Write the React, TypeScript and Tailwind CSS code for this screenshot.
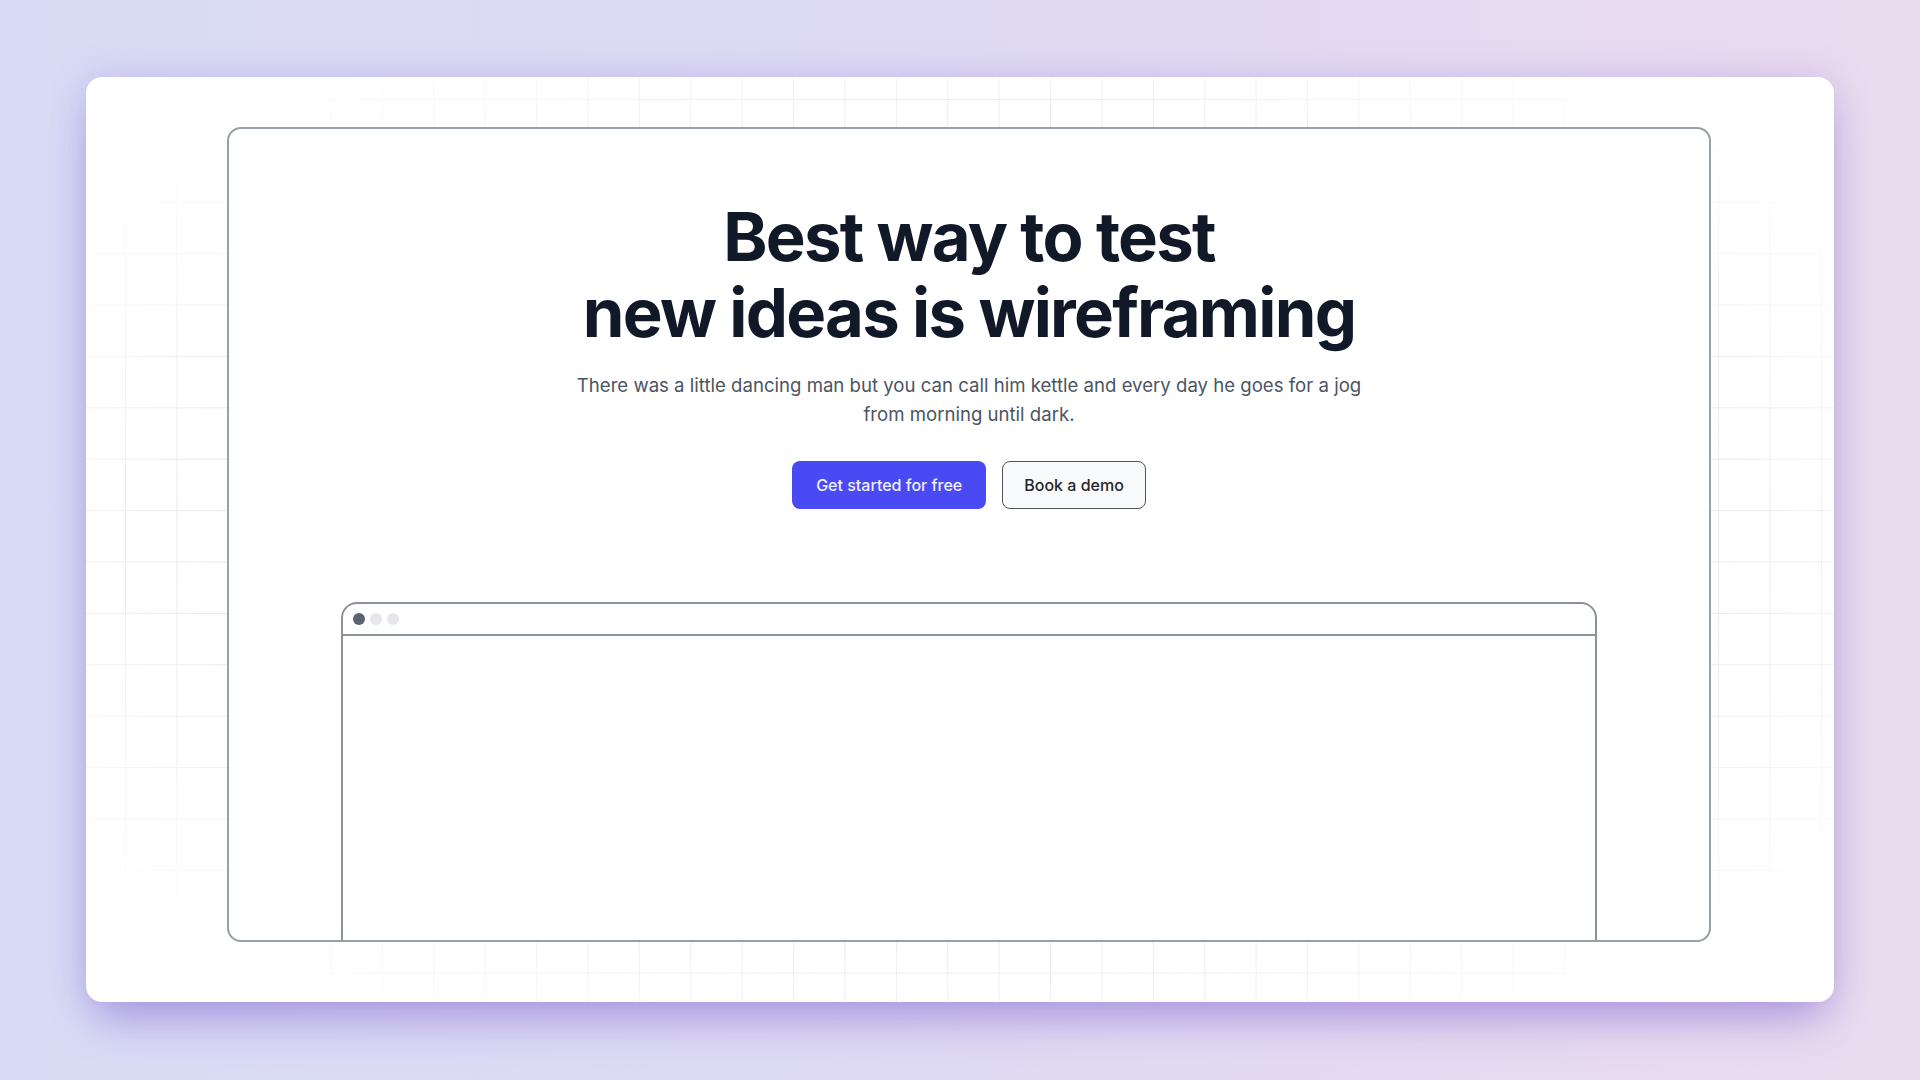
import React from "react";

export default function App() {
  return (
    <div
      className="min-h-screen w-full bg-gradient-to-r from-[#d8dbf5] via-[#dfdaf3] to-[#ebdbef] px-[86px] pt-[77px] pb-[78px]"
      style={{ fontFamily: "Inter, 'Noto Sans', sans-serif" }}
    >
      <div className="relative h-[925px] overflow-hidden rounded-2xl bg-white pl-[141px] pr-[123px] pt-[50px] pb-[60px] shadow-[0_26px_44px_-10px_rgba(110,70,200,0.4),0_0_36px_rgba(120,100,210,0.22)]">
        <div className="pointer-events-none absolute inset-0 bg-[linear-gradient(to_right,#e2e4e8_1px,transparent_1px),linear-gradient(to_bottom,#e2e4e8_1px,transparent_1px)] [background-size:51.4px_51.4px] [background-position:39px_22px] [mask-image:radial-gradient(ellipse_at_center,black_55%,transparent_88%)] [-webkit-mask-image:radial-gradient(ellipse_at_center,black_55%,transparent_88%)]" />
        <div className="relative flex h-full flex-col items-center overflow-hidden rounded-[14px] border-2 border-[#9aa0a8] bg-white pt-[70px] px-[112px]">
          <h1 className="text-center text-[67px] font-bold leading-[76px] tracking-[-0.026em] text-[#111827]">
            Best way to test
            <br />
            new ideas is wireframing
          </h1>
          <p className="mt-[20px] max-w-[820px] text-center text-[18.6px] leading-[29px] text-[#4b5563]">
            There was a little dancing man but you can call him kettle and every day he goes for a jog
            from morning until dark.
          </p>
          <div className="mt-[32px] flex gap-4">
            <button className="h-12 rounded-lg bg-[#4a4af5] px-6 text-[16px] font-medium text-[#eef0ff]">
              Get started for free
            </button>
            <button className="h-12 rounded-lg border border-[#52525b] bg-[#f9fafb] px-[21px] text-[16px] font-medium text-[#27272a]">
              Book a demo
            </button>
          </div>
          <div className="mt-[93px] w-full flex-1 rounded-t-2xl border-2 border-b-0 border-[#8c929b]">
            <div className="flex h-[32px] items-center gap-[5px] border-b-2 border-[#8c929b] pl-[10px]">
              <span className="h-3 w-3 rounded-full bg-[#5b6270]" />
              <span className="h-3 w-3 rounded-full bg-[#e5e7eb]" />
              <span className="h-3 w-3 rounded-full bg-[#e5e7eb]" />
            </div>
          </div>
        </div>
      </div>
    </div>
  );
}
